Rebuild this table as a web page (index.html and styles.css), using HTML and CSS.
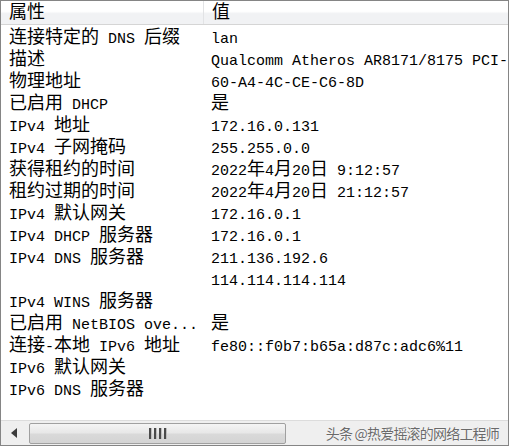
FILE: index.html
```html
<!DOCTYPE html>
<html lang="zh-CN">
<head>
<meta charset="utf-8">
<title>网络连接详细信息</title>
<link rel="stylesheet" href="styles.css">
</head>
<body>
<div class="window">
  <div class="header">
    <div class="hcell c1"><span class="z">属性</span></div>
    <div class="hcell c2"><span class="z">值</span></div>
  </div>
  <div class="list">
    <div class="row"><div class="cell c1"><span class="z">连接特定的</span> DNS <span class="z">后缀</span></div><div class="cell c2">lan</div></div>
    <div class="row"><div class="cell c1"><span class="z">描述</span></div><div class="cell c2 clip">Qualcomm Atheros AR8171/8175 PCI-E Gigabit Ethernet Controller (NDIS 6.30)</div></div>
    <div class="row"><div class="cell c1"><span class="z">物理地址</span></div><div class="cell c2">60-A4-4C-CE-C6-8D</div></div>
    <div class="row"><div class="cell c1"><span class="z">已启用</span> DHCP</div><div class="cell c2"><span class="z">是</span></div></div>
    <div class="row"><div class="cell c1">IPv4 <span class="z">地址</span></div><div class="cell c2">172.16.0.131</div></div>
    <div class="row"><div class="cell c1">IPv4 <span class="z">子网掩码</span></div><div class="cell c2">255.255.0.0</div></div>
    <div class="row"><div class="cell c1"><span class="z">获得租约的时间</span></div><div class="cell c2">2022<span class="z">年</span>4<span class="z">月</span>20<span class="z">日</span> 9:12:57</div></div>
    <div class="row"><div class="cell c1"><span class="z">租约过期的时间</span></div><div class="cell c2">2022<span class="z">年</span>4<span class="z">月</span>20<span class="z">日</span> 21:12:57</div></div>
    <div class="row"><div class="cell c1">IPv4 <span class="z">默认网关</span></div><div class="cell c2">172.16.0.1</div></div>
    <div class="row"><div class="cell c1">IPv4 DHCP <span class="z">服务器</span></div><div class="cell c2">172.16.0.1</div></div>
    <div class="row"><div class="cell c1">IPv4 DNS <span class="z">服务器</span></div><div class="cell c2">211.136.192.6</div></div>
    <div class="row"><div class="cell c1"></div><div class="cell c2">114.114.114.114</div></div>
    <div class="row"><div class="cell c1">IPv4 WINS <span class="z">服务器</span></div><div class="cell c2"></div></div>
    <div class="row"><div class="cell c1"><span class="z">已启用</span> NetBIOS ove...</div><div class="cell c2"><span class="z">是</span></div></div>
    <div class="row"><div class="cell c1"><span class="z">连接</span>-<span class="z">本地</span> IPv6 <span class="z">地址</span></div><div class="cell c2">fe80::f0b7:b65a:d87c:adc6%11</div></div>
    <div class="row"><div class="cell c1">IPv6 <span class="z">默认网关</span></div><div class="cell c2"></div></div>
    <div class="row"><div class="cell c1">IPv6 DNS <span class="z">服务器</span></div><div class="cell c2"></div></div>
  </div>
  <div class="hscroll">
    <div class="arrow"><span class="tri"></span></div>
    <div class="thumb"><span class="grip"><i></i><i></i><i></i><i></i></span></div>
    <div class="watermark">头条 @热爱摇滚的网络工程师</div>
  </div>
</div>
</body>
</html>
```

FILE: styles.css
```css
html, body {
  margin: 0;
  padding: 0;
  background: #ffffff;
}

.window {
  width: 509px;
  height: 446px;
  box-sizing: border-box;
  border: 1px solid #858585;
  display: flex;
  flex-direction: column;
  overflow: hidden;
  font-family: "Liberation Mono", monospace;
  font-size: 15px;
  color: #000;
  background: #fff;
}

.z {
  font-family: "Noto Sans CJK SC", sans-serif;
  font-size: 18px;
  line-height: 0;
}

.header {
  flex: none;
  height: 24px;
  box-sizing: border-box;
  border-bottom: 1px solid #d5d5d5;
  background: linear-gradient(#ffffff 0, #ffffff 45%, #f1f2f4 55%, #f1f2f4 100%);
  display: flex;
}

.hcell {
  height: 23px;
  box-sizing: border-box;
  padding-top: 5px;
  line-height: 18px;
  white-space: nowrap;
}

.c1 {
  flex: none;
  width: 203px;
  box-sizing: border-box;
  padding-left: 8px;
}

.hcell.c1 {
  border-right: 1px solid #e2e3e5;
}

.c2 {
  flex: 1;
  min-width: 0;
  padding-left: 7px;
}

.hcell.c2 {
  padding-left: 8px;
}

.list {
  flex: 1;
  padding-top: 1px;
}

.row {
  height: 22px;
  display: flex;
  white-space: nowrap;
}

.cell {
  height: 22px;
  box-sizing: border-box;
  padding-top: 5px;
  line-height: 18px;
}

.clip {
  overflow: hidden;
}

.hscroll {
  flex: none;
  height: 25px;
  box-sizing: border-box;
  border-top: 1px solid #dcdcdc;
  background: #efefef;
  display: flex;
  align-items: center;
  position: relative;
}

.arrow {
  flex: none;
  width: 28px;
  height: 100%;
  display: flex;
  align-items: center;
  justify-content: center;
}

.tri {
  width: 0;
  height: 0;
  border-right: 6px solid #3c3c3c;
  border-top: 5px solid transparent;
  border-bottom: 5px solid transparent;
  margin-left: -2px;
}

.thumb {
  flex: none;
  width: 257px;
  height: 21px;
  box-sizing: border-box;
  border: 1px solid #a0a0a0;
  border-radius: 2px;
  background: linear-gradient(#f4f4f4 0, #e8e8e8 45%, #d9d9d9 55%, #d4d4d4 100%);
  display: flex;
  align-items: center;
  justify-content: center;
}

.grip {
  display: flex;
  gap: 2px;
}

.grip i {
  display: block;
  width: 2px;
  height: 11px;
  background: #4a4a4a;
  border-right: 1px solid #bdbdbd;
}

.watermark {
  position: absolute;
  right: 9px;
  top: 0;
  bottom: 0;
  display: flex;
  align-items: center;
  font-family: "Noto Sans CJK SC", sans-serif;
  font-size: 14px;
  letter-spacing: -0.8px;
  color: #6a6a6a;
  text-shadow: 0 0 1px #fff, 0 0 1px #fff;
}
```
